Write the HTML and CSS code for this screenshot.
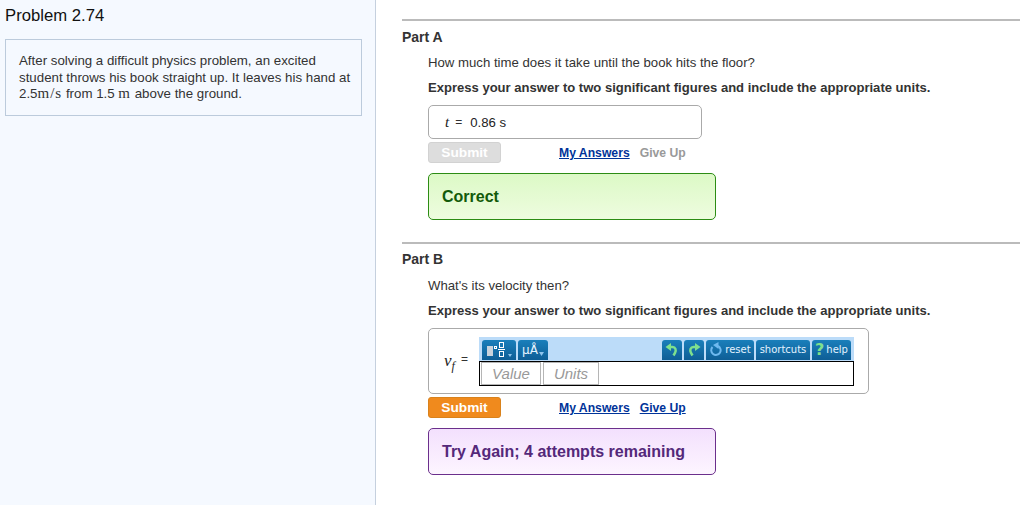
FILE: index.html
```html
<!DOCTYPE html>
<html lang="en">
<head>
<meta charset="utf-8">
<title>Problem 2.74</title>
<link rel="stylesheet" href="styles.css">
</head>
<body>
<div class="page">
  <aside class="left">
    <h1 class="title">Problem 2.74</h1>
    <div class="problem">After solving a difficult physics problem, an excited student throws his book straight up. It leaves his hand at 2.5<span class="math">m/s</span> from 1.5 <span class="math">m</span> above the ground.</div>
  </aside>
  <main class="right">
    <section class="part part-a">
      <h2 class="part-title">Part A</h2>
      <div class="part-body">
        <p class="question">How much time does it take until the book hits the floor?</p>
        <p class="instruction">Express your answer to two significant figures and include the appropriate units.</p>
        <div class="answer answer-a"><span class="var">t</span><span class="eq">=</span><span class="value">0.86 s</span></div>
        <div class="actions">
          <button class="submit submit-off">Submit</button>
          <a class="link" href="#">My Answers</a>
          <span class="link-off">Give Up</span>
        </div>
        <div class="feedback correct">Correct</div>
      </div>
    </section>
    <section class="part part-b">
      <h2 class="part-title">Part B</h2>
      <div class="part-body">
        <p class="question">What's its velocity then?</p>
        <p class="instruction">Express your answer to two significant figures and include the appropriate units.</p>
        <div class="answer answer-b">
          <span class="var var-b">v<sub>f</sub></span><span class="eq">=</span>
          <div class="editor">
            <div class="toolbar">
              <span class="tool tool-tpl">
                <svg width="32" height="20" viewBox="0 0 32 20"><rect x="4" y="6" width="6" height="10" fill="#c9d3dc"/><rect x="11.500" y="6.500" width="2" height="2" fill="none" stroke="#fff"/><rect x="16.500" y="2.500" width="4" height="5" fill="none" stroke="#fff"/><path d="M15 9.500h7" stroke="#fff"/><rect x="16.500" y="11.500" width="4" height="5" fill="none" stroke="#fff"/><path d="M25 14h4l-2 3z" fill="#8fc4ec"/></svg>
              </span>
              <span class="tool tool-unit"><span class="tool-text">μÅ</span><svg class="caret" width="5" height="4" viewBox="0 0 5 4"><path d="M0 0h5L2.500 4z" fill="#8fc4ec"/></svg></span>
              <span class="spacer"></span>
              <span class="tool tool-sq">
                <svg width="20" height="20" viewBox="0 0 20 20"><path d="M8 7h2.500c3 0 4 3 2.500 6l-1.500 2.500" fill="none" stroke="#7ee08e" stroke-width="2.500"/><path d="M3.500 7L9 3v8z" fill="#7ee08e"/></svg>
              </span>
              <span class="tool tool-sq">
                <svg width="20" height="20" viewBox="0 0 20 20"><path d="M12 7h-2.500c-3 0-4 3-2.500 6l1.500 2.500" fill="none" stroke="#7ee08e" stroke-width="2.500"/><path d="M16.500 7L11 3v8z" fill="#7ee08e"/></svg>
              </span>
              <span class="tool tool-reset">
                <svg width="13" height="16" viewBox="0 0 13 16"><path d="M3.500 5A4.700 4.700 0 1 0 9 4" fill="none" stroke="#6fb9ef" stroke-width="2"/><path d="M5.500 1v7L11 4z" fill="#6fb9ef" transform="matrix(-1 0 0 1 15 -1)"/></svg>reset
              </span>
              <span class="tool tool-short">shortcuts</span>
              <span class="tool tool-help"><span class="q">?</span>help</span>
            </div>
            <div class="fields">
              <span class="field field-value">Value</span>
              <span class="field field-units">Units</span>
            </div>
          </div>
        </div>
        <div class="actions">
          <button class="submit">Submit</button>
          <a class="link" href="#">My Answers</a>
          <a class="link" href="#">Give Up</a>
        </div>
        <div class="feedback again">Try Again; 4 attempts remaining</div>
      </div>
    </section>
  </main>
</div>
</body>
</html>
```
FILE: styles.css
```css
* { box-sizing: border-box; }
html, body { margin: 0; padding: 0; }
body {
  width: 1020px;
  height: 505px;
  overflow: hidden;
  background: #fff;
  color: #222;
  font-family: "Liberation Sans", Arial, sans-serif;
  font-size: 13px;
}
.page { display: flex; height: 505px; }
.left {
  width: 376px;
  flex: none;
  background: #f5f9ff;
  border-right: 1px solid #c5d0de;
  padding: 7px 13px 0 5px;
}
.title {
  margin: 0 0 15px;
  font-size: 16.700px;
  line-height: 17px;
  font-weight: normal;
  color: #111;
}
.problem {
  width: 357px;
  height: 77px;
  border: 1px solid #bccbdc;
  padding: 13px 10px 0 13px;
  font-size: 13.300px;
  line-height: 16.500px;
  color: #333;
}
.math { font-family: "Liberation Serif", serif; font-size: 15px; line-height: 1; letter-spacing: 1px; }
.right { flex: 1; padding: 19px 0 0 26px; min-width: 0; }
.part { border-top: 2px solid #bbb; }
.part-a { height: 223px; }
.part-title {
  margin: 0;
  padding-top: 7px;
  font-size: 14px;
  line-height: 16px;
  font-weight: bold;
  color: #333;
}
.part-a .part-title { padding-top: 8px; }
.part-body { padding: 11px 0 0 26px; }
.part-a .part-body { padding-top: 10px; }
.question { margin: 0; font-size: 13.200px; line-height: 16px; color: #333; }
.instruction { margin: 9px 0 0; font-size: 13.050px; line-height: 16px; font-weight: bold; color: #333; }
.answer {
  display: flex;
  align-items: center;
  margin-top: 9px;
  background: #fff;
  border: 1px solid #aaa;
  border-radius: 5px;
}
.answer-a { width: 274px; height: 34px; padding-left: 16px; }
.answer-b { width: 441px; height: 66px; padding-left: 15px; }
.var { font-family: "Liberation Serif", serif; font-style: italic; font-size: 15px; color: #222; }
.var-b { font-size: 17px; }
.var-b sub { font-size: 12px; line-height: 0; }
.eq { margin: 0 8px 0 6px; font-size: 12px; color: #333; }
.answer-b .eq { margin: -5px 0 0 6px; }
.value { font-size: 13.200px; color: #222; }
.actions { display: flex; align-items: center; height: 22px; margin-top: 2px; }
.submit {
  width: 73px;
  height: 21px;
  padding: 0;
  border: 1px solid #d9821c;
  border-radius: 3px;
  background: #f08a1d;
  color: #fff;
  font-family: "Liberation Sans", Arial, sans-serif;
  font-size: 13.700px;
  font-weight: bold;
  margin-right: 58px;
}
.submit-off { background: #ddd; border-color: #d2d2d2; }
.link { color: #003399; font-size: 12.200px; font-weight: bold; text-decoration: underline; margin: 2px 10px 0 0; }
.link-off { color: #999; font-size: 12.200px; font-weight: bold; margin-top: 2px; }
.feedback {
  width: 288px;
  height: 47px;
  margin-top: 10px;
  padding-left: 13px;
  display: flex;
  align-items: center;
  border-radius: 5px;
  font-size: 16px;
  font-weight: bold;
}
.correct { border: 1px solid #2c8c14; background: linear-gradient(#dcf9c6, #eefcdf); color: #125a0a; }
.again { border: 1px solid #6b2f8c; background: linear-gradient(#f3e0fd, #fdf5ff); color: #54287a; }
.editor { width: 375px; height: 49px; flex: none; margin: 0 14px 0 auto; }
.toolbar {
  display: flex;
  align-items: flex-end;
  gap: 2px;
  height: 24px;
  padding: 0 3px 1px 3px;
  background: #bcdcf9;
}
.spacer { flex: 1; }
.tool {
  display: flex;
  align-items: center;
  justify-content: center;
  height: 20px;
  border-radius: 3px 3px 0 0;
  background: linear-gradient(#1a7fbb, #0e5e96);
  color: #e4f3ff;
  font-family: "DejaVu Sans", sans-serif;
  font-size: 10px;
  white-space: nowrap;
}
.tool-tpl { width: 34px; }
.tool-unit { width: 30px; gap: 1px; }
.tool-text { font-size: 12px; }
.caret { margin-top: 8px; }
.tool-sq { width: 20px; }
.tool-reset { width: 48px; gap: 3px; }
.tool-short { width: 54px; }
.tool-help { width: 39px; gap: 2px; }
.q { color: #7ee08e; font-size: 16px; font-weight: bold; line-height: 16px; }
.fields {
  display: flex;
  gap: 2px;
  height: 25px;
  padding-left: 1px;
  border: 1px solid #000;
  background: #fff;
}
.field {
  display: flex;
  align-items: center;
  justify-content: center;
  height: 23px;
  border: 1px solid #b5b5b5;
  color: #999;
  font-size: 15px;
  font-style: italic;
}
.field-value { width: 60px; }
.field-units { width: 56px; }
```
